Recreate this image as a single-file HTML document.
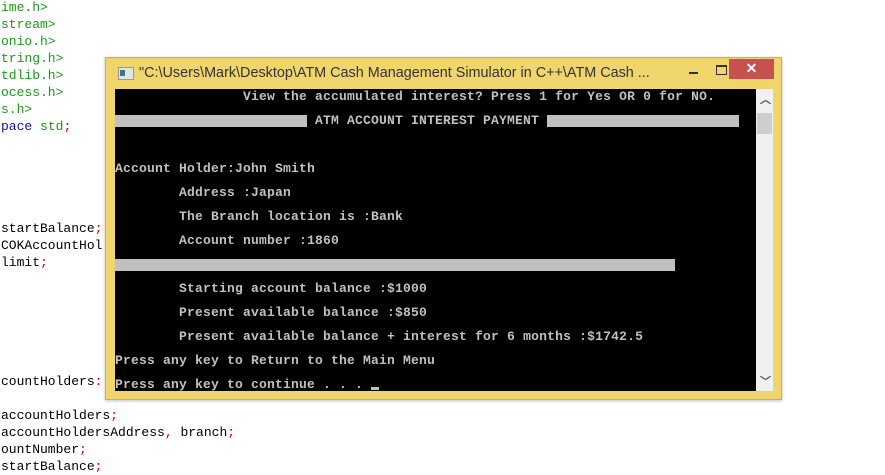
<!DOCTYPE html>
<html><head><style>
body{margin:0;width:885px;height:468px;background:#fff;position:relative;overflow:hidden}
.code{position:absolute;left:1px;top:-1px;font:13px/17px "Liberation Mono",monospace;white-space:pre;color:#000}
.g{color:#1a9a1a}.b{color:#1010a0}.r{color:#e00000}
.win{position:absolute;left:105px;top:57px;width:675px;height:341px;background:#f0d56c;border:1px solid #c8b050;box-shadow:0 1px 3px rgba(0,0,0,.25)}
.title{position:absolute;left:33px;top:7px;font:14.4px "Liberation Sans",sans-serif;color:#333;white-space:nowrap}
.ico{position:absolute;left:12px;top:9px;width:14px;height:11px;background:#dfe6ea;border:1px solid #999}
.ico:before{content:"";position:absolute;left:1px;top:2px;width:5px;height:6px;background:#3a7a7a}
.close{position:absolute;left:623px;top:1px;width:45px;height:20px;background:#c75050;color:#fff;font:bold 14px "Liberation Sans";text-align:center;line-height:19px}
.min{position:absolute;left:583px;top:14px;width:9px;height:2px;background:#333}
.max{position:absolute;left:610px;top:7px;width:9px;height:7px;border:1px solid #333;border-top-width:2px}
.con{position:absolute;left:9px;top:31px;width:641px;height:302px;background:#000;overflow:hidden}
.sb{position:absolute;left:650px;top:31px;width:17px;height:302px;background:#f0f0f0}
.thumb{position:absolute;left:1px;top:24px;width:15px;height:21px;background:#cdcdcd}
.sb span{position:absolute;left:4px;color:#555;font:bold 11px "Liberation Sans"}
.t{position:absolute;left:0;font:bold 13px/12px "Liberation Mono",monospace;letter-spacing:0.2px;color:#c0c0c0;white-space:pre}
.bar{position:absolute;height:12px;background:#c0c0c0}
</style></head><body>
<div class="code"><span class="g">ime.h&gt;
stream&gt;
onio.h&gt;
tring.h&gt;
tdlib.h&gt;
ocess.h&gt;
s.h&gt;</span>
<span class="b">pace</span> <span class="g">std</span><span class="r">;</span>





startBalance<span class="r">;</span>
COKAccountHol
limit<span class="r">;</span>






countHolders<span class="r">:</span>

accountHolders<span class="r">;</span>
accountHoldersAddress<span class="r">,</span> branch<span class="r">;</span>
ountNumber<span class="r">;</span>
startBalance<span class="r">;</span></div>
<div class="win">
<div class="ico"></div>
<div class="title">"C:\Users\Mark\Desktop\ATM Cash Management Simulator in C++\ATM Cash ...</div>
<div class="min"></div><div class="max"></div>
<div class="close">✕</div>
<div class="con">
<div class="t" style="top:2px">                View the accumulated interest? Press 1 for Yes OR 0 for NO.</div>
<div class="bar" style="left:0;top:26px;width:192px"></div>
<div class="t" style="top:26px;left:192px"> ATM ACCOUNT INTEREST PAYMENT </div>
<div class="bar" style="left:432px;top:26px;width:192px"></div>
<div class="t" style="top:74px">Account Holder:John Smith</div>
<div class="t" style="top:98px">        Address :Japan</div>
<div class="t" style="top:122px">        The Branch location is :Bank</div>
<div class="t" style="top:146px">        Account number :1860</div>
<div class="bar" style="left:0;top:170px;width:560px"></div>
<div class="t" style="top:194px">        Starting account balance :$1000</div>
<div class="t" style="top:218px">        Present available balance :$850</div>
<div class="t" style="top:242px">        Present available balance + interest for 6 months :$1742.5</div>
<div class="t" style="top:266px">Press any key to Return to the Main Menu</div>
<div class="t" style="top:290px">Press any key to continue . . . </div>
<div class="bar" style="left:256px;top:298px;width:8px;height:3px"></div>
</div>
<div class="sb"><span style="top:2px">︿</span><div class="thumb"></div><span style="top:284px">﹀</span></div>
</div>
</body></html>
